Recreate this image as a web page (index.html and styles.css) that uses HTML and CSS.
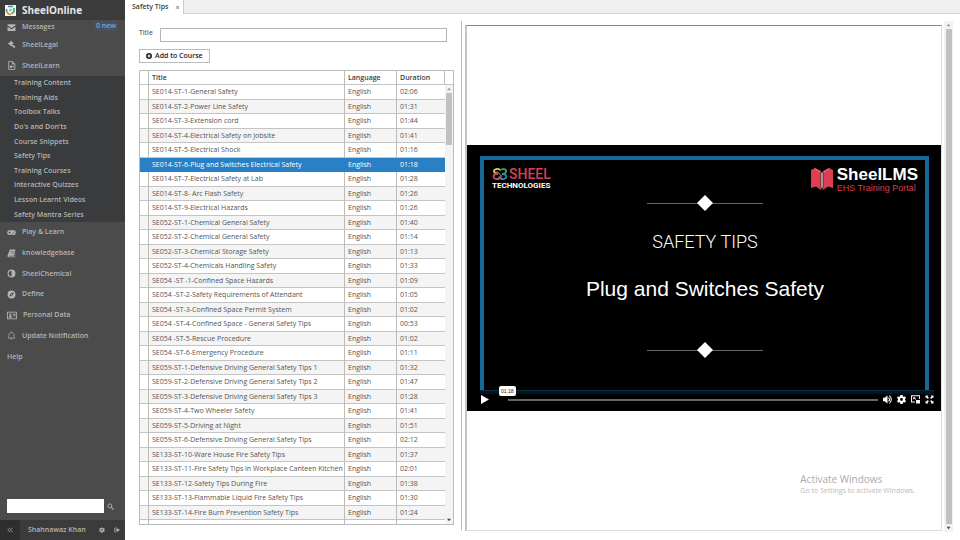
FILE: index.html
```html
<!DOCTYPE html>
<html lang="en">
<head>
<meta charset="utf-8">
<title>SheelOnline - Safety Tips</title>
<link rel="stylesheet" href="styles.css">
</head>
<body>
<div class="app">
  <aside class="sidebar">
    <header class="brand">
      <svg class="brand-logo" viewBox="0 0 11 11"><rect width="11" height="11" fill="#f2f5ef"/><path d="M3 1.500h5M1.500 4v3" stroke="#3c9aa8" stroke-width="1.500" fill="none"/><path d="M2 6a3.500 3.500 0 0 0 4 3.500" stroke="#e08a3c" stroke-width="1.600" fill="none"/><path d="M9 3v3.500L6.500 9" stroke="#39a35b" stroke-width="1.500" fill="none"/><circle cx="5.500" cy="5" r="1.500" fill="#8cc5d8"/></svg>
      <span>SheelOnline</span>
    </header>
    <nav class="menu">
      <a class="item messages" href="#"><svg class="icon" viewBox="0 0 16 16"><path d="M1 2h14v2.500L8 9 1 4.500zM1 6.500l7 4.500 7-4.500V14H1z"/></svg><span>Messages</span><span class="badge">0 new</span></a>
      <a class="item legal" href="#"><svg class="icon" viewBox="0 0 16 16"><path d="M7 1l5 5-1 1-1-.5L8 9l.5 1-1 1-6-5 1-1 1 .5L6.500 3 6 2zM10 8l5 4-2 2.500-5-4.500z"/></svg><span>SheelLegal</span></a>
      <a class="item learn" href="#"><svg class="icon" viewBox="0 0 16 16"><path d="M3 1h7l4 4v10H3z" fill="none" stroke="currentColor" stroke-width="1.500"/><path d="M9 1v5h5M5 8h4v4H5zM9 10l3-2v4z"/></svg><span>SheelLearn</span></a>
      <div class="submenu">
        <a href="#">Training Content</a>
        <a href="#">Training Aids</a>
        <a href="#">Toolbox Talks</a>
        <a href="#">Do's and Don'ts</a>
        <a href="#">Course Snippets</a>
        <a href="#">Safety Tips</a>
        <a href="#">Training Courses</a>
        <a href="#">Interactive Quizzes</a>
        <a href="#">Lesson Learnt Videos</a>
        <a href="#">Safety Mantra Series</a>
      </div>
      <div class="sections">
        <a class="item" href="#"><svg class="icon" viewBox="0 0 16 16"><path fill-rule="evenodd" d="M4.500 4h7a4 4 0 0 1 0 8.500c-1.500 0-2-1-3.500-1s-2 1-3.500 1a4 4 0 0 1 0-8.500zM4 6v1.500H2.500v1.200H4V10h1.200V8.700h1.500V7.500H5.200V6zM10 8.500v1.500h1.500V8.500zM12 6.500V8h1.500V6.500z"/></svg><span>Play &amp; Learn</span></a>
        <a class="item" href="#"><svg class="icon" viewBox="0 0 16 16"><path fill-rule="evenodd" d="M5 1h10l-3 11H4c-1 0-1 1.500 0 1.500h9L15.500 5 14 14.500H3c-2 0-2.500-1.500-2-3zM6.500 4l-.3 1H12l.3-1zM6 6.500l-.3 1h5.800l.3-1z"/></svg><span>knowledgebase</span></a>
        <a class="item" href="#"><svg class="icon" viewBox="0 0 16 16"><circle cx="8" cy="8" r="6" fill="none" stroke="currentColor" stroke-width="2"/><path d="M8 2a6 6 0 0 1 0 12z"/></svg><span>SheelChemical</span></a>
        <a class="item" href="#"><svg class="icon" viewBox="0 0 16 16"><path fill-rule="evenodd" d="M8 1a7 7 0 1 1 0 14A7 7 0 0 1 8 1zM12.500 4L6.500 6 4 12l6-2.500zM8 7a1 1 0 1 1 0 2 1 1 0 0 1 0-2z"/></svg><span>Define</span></a>
        <a class="item" href="#"><svg class="icon wide" viewBox="0 0 18 16"><rect x="1" y="2" width="16" height="12" fill="none" stroke="currentColor" stroke-width="1.500"/><circle cx="6" cy="6.500" r="2"/><path d="M3 12c0-5 6-5 6 0zM10.500 5h5v1.500h-5zM10.500 8h5v1.500h-5z"/></svg><span>Personal Data</span></a>
        <a class="item" href="#"><svg class="icon" viewBox="0 0 16 16"><path d="M8 1v1.500M1.500 12.500c2-1.500 2-3 2-6C4 1.500 12 1.500 12.500 6.500c0 3 0 4.500 2 6zM6.500 13c0 2 3 2 3 0" fill="none" stroke="currentColor" stroke-width="1.300"/></svg><span>Update Notification</span></a>
        <a class="item" href="#"><span>Help</span></a>
      </div>
    </nav>
    <form class="search">
      <input type="text" aria-label="Search menu">
      <button type="button" aria-label="Search"><svg class="icon" viewBox="0 0 16 16"><circle cx="6.500" cy="6.500" r="4.500" fill="none" stroke="currentColor" stroke-width="2"/><path d="M10 10l5 5" stroke="currentColor" stroke-width="2.500"/></svg></button>
    </form>
    <footer class="user">
      <button class="collapse" type="button" aria-label="Collapse menu"><svg viewBox="0 0 8 8"><path d="M4 1L1 4l3 3M7.500 1l-3 3 3 3" fill="none" stroke="currentColor"/></svg></button>
      <span class="user-name">Shahnawaz Khan</span>
      <button type="button" aria-label="Settings"><svg viewBox="0 0 16 16"><path fill-rule="evenodd" d="M6.500 1h3l.5 2 1.500.7 2-1 1.800 2.600-1.300 1.500V9l1.300 1.500-1.800 2.500-2-.8-1.500.8-.5 2h-3L6 13l-1.500-.8-2 .8L.700 10.500 2 9V7L.700 5.300l1.800-2.600 2 1L6 3zM8 5.700a2.300 2.300 0 1 0 0 4.600 2.300 2.300 0 0 0 0-4.600z"/></svg></button>
      <button type="button" aria-label="Log out"><svg viewBox="0 0 16 16"><path d="M7 2.500H2v11h5" fill="none" stroke="currentColor" stroke-width="2"/><path d="M5 6h4V2.500L15.500 8 9 13.500V10H5z"/></svg></button>
    </footer>
  </aside>

  <main class="main">
    <div class="tabs">
      <div class="tab"><a href="#">Safety Tips</a><button type="button" aria-label="Close tab">×</button></div>
    </div>
    <div class="content">
      <section class="list-pane">
        <form class="filter">
          <label for="title">Title</label>
          <input id="title" type="text">
        </form>
        <button class="add" type="button"><svg viewBox="0 0 16 16"><path fill-rule="evenodd" d="M8 0a8 8 0 1 1 0 16A8 8 0 0 1 8 0zM6.500 4v2.500H4v3h2.500V12h3V9.500H12v-3H9.500V4z"/></svg>Add to Course</button>
        <div class="grid">
          <table>
            <colgroup><col class="c-mark"><col class="c-title"><col class="c-lang"><col class="c-dur"><col class="c-end"></colgroup>
            <thead><tr><th></th><th>Title</th><th>Language</th><th>Duration</th><th></th></tr></thead>
            <tbody>
              <tr><td></td><td>SE014-ST-1-General Safety</td><td>English</td><td>02:06</td></tr>
              <tr><td></td><td>SE014-ST-2-Power Line Safety</td><td>English</td><td>01:31</td></tr>
              <tr><td></td><td>SE014-ST-3-Extension cord</td><td>English</td><td>01:44</td></tr>
              <tr><td></td><td>SE014-ST-4-Electrical Safety on Jobsite</td><td>English</td><td>01:41</td></tr>
              <tr><td></td><td>SE014-ST-5-Electrical Shock</td><td>English</td><td>01:16</td></tr>
              <tr class="selected"><td></td><td>SE014-ST-6-Plug and Switches Electrical Safety</td><td>English</td><td>01:18</td></tr>
              <tr><td></td><td>SE014-ST-7-Electrical Safety at Lab</td><td>English</td><td>01:28</td></tr>
              <tr><td></td><td>SE014-ST-8- Arc Flash Safety</td><td>English</td><td>01:26</td></tr>
              <tr><td></td><td>SE014-ST-9-Electrical Hazards</td><td>English</td><td>01:26</td></tr>
              <tr><td></td><td>SE052-ST-1-Chemical General Safety</td><td>English</td><td>01:40</td></tr>
              <tr><td></td><td>SE052-ST-2-Chemical General Safety</td><td>English</td><td>01:14</td></tr>
              <tr><td></td><td>SE052-ST-3-Chemical Storage Safety</td><td>English</td><td>01:13</td></tr>
              <tr><td></td><td>SE052-ST-4-Chemicals Handling Safety</td><td>English</td><td>01:33</td></tr>
              <tr><td></td><td>SE054 -ST -1-Confined Space Hazards</td><td>English</td><td>01:09</td></tr>
              <tr><td></td><td>SE054 -ST-2-Safety Requirements of Attendant</td><td>English</td><td>01:05</td></tr>
              <tr><td></td><td>SE054 -ST-3-Confined Space Permit System</td><td>English</td><td>01:02</td></tr>
              <tr><td></td><td>SE054 -ST-4-Confined Space - General Safety Tips</td><td>English</td><td>00:53</td></tr>
              <tr><td></td><td>SE054 -ST-5-Rescue Procedure</td><td>English</td><td>01:02</td></tr>
              <tr><td></td><td>SE054 -ST-6-Emergency Procedure</td><td>English</td><td>01:11</td></tr>
              <tr><td></td><td>SE059-ST-1-Defensive Driving General Safety Tips 1</td><td>English</td><td>01:32</td></tr>
              <tr><td></td><td>SE059-ST-2-Defensive Driving General Safety Tips 2</td><td>English</td><td>01:47</td></tr>
              <tr><td></td><td>SE059-ST-3-Defensive Driving General Safety Tips 3</td><td>English</td><td>01:28</td></tr>
              <tr><td></td><td>SE059-ST-4-Two Wheeler Safety</td><td>English</td><td>01:41</td></tr>
              <tr><td></td><td>SE059-ST-5-Driving at Night</td><td>English</td><td>01:51</td></tr>
              <tr><td></td><td>SE059-ST-6-Defensive Driving General Safety Tips</td><td>English</td><td>02:12</td></tr>
              <tr><td></td><td>SE133-ST-10-Ware House Fire Safety Tips</td><td>English</td><td>01:37</td></tr>
              <tr><td></td><td>SE133-ST-11-Fire Safety Tips in Workplace Canteen Kitchen</td><td>English</td><td>02:01</td></tr>
              <tr><td></td><td>SE133-ST-12-Safety Tips During Fire</td><td>English</td><td>01:38</td></tr>
              <tr><td></td><td>SE133-ST-13-Flammable Liquid Fire Safety Tips</td><td>English</td><td>01:30</td></tr>
              <tr><td></td><td>SE133-ST-14-Fire Burn Prevention Safety Tips</td><td>English</td><td>01:24</td></tr>
              <tr><td></td><td></td><td></td><td></td></tr>
            </tbody>
          </table>
          <div class="scrollbar grid-scroll"><i class="arrow up"></i><div class="thumb"></div><i class="arrow down"></i></div>
        </div>
      </section>

      <section class="view-pane">
        <div class="frame">
          <div class="video">
            <div class="slide">
              <div class="logos">
                <div class="tech">
                  <div class="tech-top"><svg viewBox="0 0 16 12"><g fill="none" stroke-width="1.800"><path d="M8 2C6 0 1.500 1 2 3.500 2.300 5 5 5.500 6 5.500" stroke="#e3c34a"/><path d="M6 5.500C1 5.500 0 10 4 11c2 .3 4-.5 5-2.500" stroke="#d8455f"/><path d="M8 2.500C10 0 15 1 14 4c-.5 1.500-2 1.800-4 1.800" stroke="#3fa45c"/><path d="M10 6c5 0 5.500 4 2 5-2 .5-4-.5-5-2.500" stroke="#3c83ad"/><path d="M5 3.500l5 5" stroke="#b9a66a" stroke-width="1"/></g></svg><span>SHEEL</span></div>
                  <div class="tech-bottom">TECHNOLOGIES</div>
                </div>
                <div class="lms">
                  <svg viewBox="0 0 22 24"><path d="M0 3l4-2 6 3v19l-5-3.500L0 21zM22 3l-4-2-6 3v19l5-3.500 5 1.500z" fill="#dc3f52"/><path d="M4 1.500L9 5M18 1.500L13 5" stroke="#f0a0a8" stroke-width=".6"/><path d="M10 5h2v15l-1 3-1-3z" fill="#e9e2dc" stroke="#111" stroke-width=".7"/></svg>
                  <div><div class="lms-name">SheelLMS</div><div class="lms-sub">EHS Training Portal</div></div>
                </div>
              </div>
              <svg class="rule" viewBox="0 0 116 16"><path d="M0 8.500h116" stroke="#666"/><path d="M58 0l8 8-8 8-8-8z" fill="#fff"/></svg>
              <div class="kicker">SAFETY TIPS</div>
              <div class="headline">Plug and Switches Safety</div>
              <svg class="rule" viewBox="0 0 116 16"><path d="M0 8.500h116" stroke="#666"/><path d="M58 0l8 8-8 8-8-8z" fill="#fff"/></svg>
            </div>
            <div class="controls">
              <button type="button" aria-label="Play"><svg viewBox="0 0 9 9"><path d="M1 0l8 4.500L1 9z"/></svg></button>
              <div class="track"><span class="time">01:18</span></div>
              <button type="button" aria-label="Volume"><svg viewBox="0 0 16 16"><path d="M0 5h3l5-4v14l-5-4H0z"/><path d="M10 4.500c2 2 2 5 0 7M11 1c5 3 5 11 0 14" fill="none" stroke="currentColor" stroke-width="1.800"/></svg></button>
              <button type="button" aria-label="Settings"><svg viewBox="0 0 16 16"><path fill-rule="evenodd" d="M6 0h4l.5 2.500 1.500.8 2.300-.8 1.700 3-1.800 1.700v1.600L16 10.500l-1.700 3-2.300-.8-1.500.8L10 16H6l-.5-2.500-1.500-.8-2.300.8-1.700-3 1.800-1.700V7.200L0 5.500l1.700-3 2.300.8 1.500-.8zM8 5.500a2.500 2.500 0 1 0 0 5 2.500 2.500 0 0 0 0-5z"/></svg></button>
              <button type="button" aria-label="Picture in picture"><svg viewBox="0 0 16 16"><path d="M7 12.500H1v-11h14V7" fill="none" stroke="currentColor" stroke-width="1.800"/><path d="M9 9h7v6H9zM4 4h4L7 5.500 9 7.500 8 8.500l-2-2L4 8z"/></svg></button>
              <button type="button" aria-label="Full screen"><svg viewBox="0 0 16 16"><path d="M1 1h5L4.500 2.500 7 5 5 7 2.500 4.500 1 6zM15 1v5l-1.500-1.500L11 7 9 5l2.500-2.500L10 1zM1 15v-5l1.500 1.500L5 9l2 2-2.500 2.500L6 15zM15 15h-5l1.500-1.500L9 11l2-2 2.500 2.500L15 10z"/></svg></button>
            </div>
          </div>
          <div class="notice"><div class="notice-title">Activate Windows</div><div>Go to Settings to activate Windows.</div></div>
        </div>
        <div class="scrollbar page-scroll"><i class="arrow up"></i><div class="thumb"></div><i class="arrow down"></i></div>
      </section>
    </div>
  </main>
</div>
</body>
</html>
```
FILE: styles.css
```css
* { box-sizing: border-box; }
body {
  margin: 0;
  background: #fff;
  color: #404040;
  font: 7px/10px "Open Sans", "Noto Sans", sans-serif;
}
a { color: inherit; text-decoration: none; }
button, input { font: inherit; color: inherit; padding: 0; border: 0; background: none; border-radius: 0; }
svg { display: block; fill: currentColor; flex: none; }

.app { display: flex; height: 100vh; overflow: hidden; }

/* Sidebar */
.sidebar {
  display: flex;
  flex-direction: column;
  flex: none;
  width: 125px;
  background: #4b4b4b;
  color: #b4b4b4;
  font-weight: 600;
}
.brand {
  display: flex;
  align-items: center;
  gap: 6px;
  height: 20px;
  padding-left: 5px;
  background: #3b3b3b;
  color: #e6e6e6;
  font-size: 10px;
  font-weight: 700;
}
.brand-logo { width: 11px; height: 11px; }
.item { display: flex; align-items: center; gap: 6px; padding-left: 7px; }
.icon { width: 9px; height: 9px; }
.icon.wide { width: 10px; }
.messages { height: 14px; }
.legal, .learn { height: 21px; }
.badge {
  margin: 0 7px 2px auto;
  padding: 0 2px;
  background: #46535e;
  color: #7aa6cb;
}
.submenu {
  display: grid;
  grid-auto-rows: 1fr;
  align-items: center;
  height: 146px;
  padding-left: 14px;
  background: #3a3b3c;
}
.sections { display: grid; grid-auto-rows: 1fr; height: 145px; }
.search { display: flex; align-items: center; gap: 3px; margin-top: auto; padding: 0 0 7px 7px; }
.search input { width: 97px; height: 14px; background: #fff; color: #333; }
.search .icon { width: 7px; height: 7px; }
.user { display: flex; align-items: center; height: 20px; background: #3b3b3b; }
.user svg { width: 6px; height: 6px; }
.user button + button { margin-left: 9px; }
.user .collapse { display: grid; place-items: center; width: 20px; height: 20px; background: #2e2e2e; }
.user-name { margin: 0 13px 0 8px; }

/* Tabs */
.main { display: flex; flex-direction: column; flex: 1; min-width: 0; }
.tabs { display: flex; height: 14px; background: #f0f0f0; box-shadow: inset 0 -1px #d5d5d5; }
.tab {
  display: flex;
  align-items: center;
  gap: 7px;
  padding: 0 3px 0 7px;
  background: #fff;
  border-right: 1px solid #ccc;
  font-weight: 600;
}
.tab button { color: #777; line-height: 7px; }

/* List */
.content { display: flex; flex: 1; min-height: 0; padding-top: 7px; }
.list-pane {
  display: flex;
  flex-direction: column;
  align-items: flex-start;
  flex: none;
  width: 337px;
  margin-bottom: 10px;
  padding: 7px 7px 5px 14px;
  border-right: 1px solid #bbb;
}
.filter { display: flex; gap: 7px; width: 308px; }
.filter input { flex: 1; height: 14px; border: 1px solid #b5b5b5; }
.add {
  display: flex;
  align-items: center;
  gap: 3px;
  height: 14px;
  margin: 7px 0;
  padding: 0 6px;
  border: 1px solid #bbb;
  color: #222;
  font-weight: 600;
}
.add svg { width: 6px; height: 6px; }
.grid {
  position: relative;
  flex: 1;
  align-self: stretch;
  min-height: 0;
  overflow: hidden;
  border: 1px solid #bbb;
}
table { width: 100%; table-layout: fixed; border-collapse: separate; border-spacing: 0; }
.c-mark { width: 9px; }
.c-lang { width: 52px; }
.c-dur { width: 48px; }
.c-end { width: 8px; }
th, td {
  height: 15px;
  padding: 0 3px;
  border-right: 1px solid #bbb;
  border-bottom: 1px solid #c4c4c4;
  text-align: left;
  white-space: nowrap;
}
th { height: 14px; font-weight: 600; }
th:last-child, td:last-child { border-right: 0; }
td { color: #555; }
tbody tr:nth-child(even) td { height: 14px; background: #f4f4f4; }
tbody tr.selected td { background: #2a80c4; border-color: #2a80c4; color: #fff; }

.scrollbar { display: flex; flex-direction: column; align-items: center; background: #f3f3f3; }
.thumb { width: 6px; background: #c1c1c1; }
.arrow { flex: none; width: 4px; height: 8px; background: #999; clip-path: polygon(50% 35%, 100% 65%, 0 65%); }
.arrow.down { background: #444; clip-path: polygon(0 35%, 100% 35%, 50% 65%); margin-top: auto; }
.grid-scroll { position: absolute; top: 14px; right: 0; bottom: 0; width: 8px; }
.grid-scroll .thumb { height: 52px; }

/* Viewer */
.view-pane { display: flex; flex: 1; min-width: 0; padding: 0 7px 8px 3px; }
.frame {
  position: relative;
  display: flex;
  align-items: center;
  flex: 1;
  margin: 4px 2px 1px 0;
  border: 1px solid #ddd;
  border-top-color: #888;
  border-left: 2px solid #c5c5c5;
}
.page-scroll { width: 9px; }
.page-scroll .thumb { flex: 1; }
.video {
  display: flex;
  flex-direction: column;
  width: 100%;
  aspect-ratio: 16 / 9;
  padding: 11px 12px 0 13px;
  background: #000;
  color: #fff;
}
.slide {
  display: flex;
  flex-direction: column;
  align-items: center;
  flex: 1;
  padding: 7px 7px 0 8px;
  border: 4px solid #156a9b;
  border-bottom: 0;
}
.logos { display: flex; justify-content: space-between; align-self: stretch; height: 28px; }
.tech-top { display: flex; align-items: center; height: 14px; gap: 1px; }
.tech-top svg { width: 16px; height: 12px; }
.tech-top span { color: #d2425a; font: 500 14px/14px Roboto, sans-serif; }
.tech-bottom { font: 700 8px/10px Roboto, sans-serif; }
.lms { display: flex; gap: 4px; }
.lms svg { width: 22px; height: 24px; }
.lms-name { font: 700 17px/16px "Liberation Sans", Arial, sans-serif; }
.lms-sub { color: #cf4152; font: 9px/10px "Liberation Sans", Arial, sans-serif; }
.rule { width: 116px; height: 16px; }
.kicker { padding: 20px 0 23px; font: 300 18px/22px Roboto, sans-serif; }
.headline { padding-bottom: 40px; font: 21px/26px "Liberation Sans", Arial, sans-serif; }
.controls {
  display: flex;
  align-items: center;
  gap: 5px;
  height: 21px;
  margin-right: -5px;
  padding-bottom: 2px;
  background: linear-gradient(#073047 1px, #04141e 1px, #04141e 4px, transparent 4px);
}
.controls svg { width: 9px; height: 9px; }
.track { position: relative; flex: 1; height: 2px; margin-left: 14px; background: #666; }
.time {
  position: absolute;
  left: -9px;
  bottom: 5px;
  padding: 0 2px;
  background: #fff;
  border-radius: 2px;
  color: #222;
  font: 5px/10px "Liberation Sans", Arial, sans-serif;
}
.notice { position: absolute; right: 26px; bottom: 34px; color: #bbb; line-height: 10px; }
.notice-title { color: #aaa; font-size: 10px; line-height: 13px; }
```
